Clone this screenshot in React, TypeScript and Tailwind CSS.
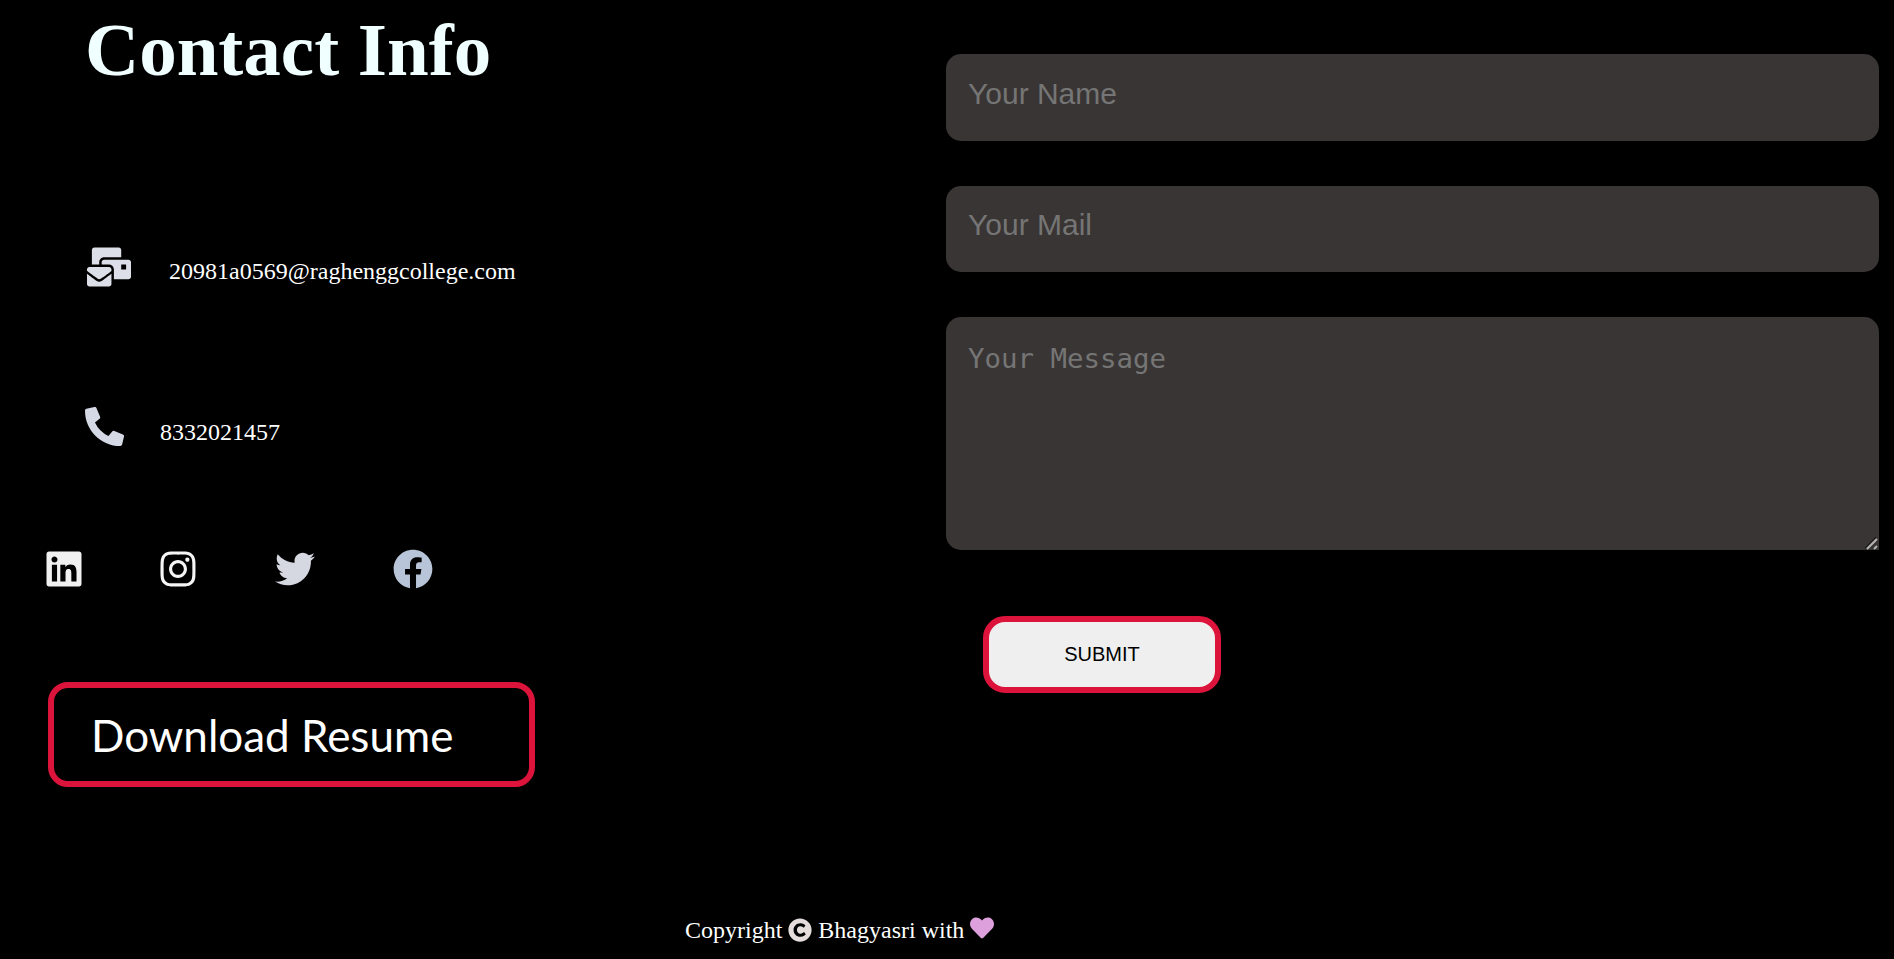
import { FaMailBulk, FaPhoneAlt, FaLinkedin, FaInstagram, FaTwitter, FaFacebook, FaCopyright, FaHeart } from "react-icons/fa";

export default function App() {
  return (
    <div className="h-[959px] overflow-hidden bg-black font-['Liberation_Serif',serif] text-white">
      <div className="flex h-[916px]">
        <div className="w-[946px] shrink-0">
          <h1 className="ml-[85px] text-[75px] leading-[100px] font-bold text-[#f0ffff]">Contact Info</h1>
          <div className="mt-[144px] ml-[87px] flex h-[45px] items-center">
            <FaMailBulk size={44} className="text-[#dcdfe8]" />
            <span className="mt-[9px] ml-[38px] text-[24px] leading-[28px]">20981a0569@raghenggcollege.com</span>
          </div>
          <div className="mt-[117px] ml-[85px] flex h-[40px] items-center">
            <FaPhoneAlt size={39} className="text-[#d5d9e5]" />
            <span className="mt-[12px] ml-[36px] text-[24px] leading-[28px]">8332021457</span>
          </div>
          <div className="mt-[103px] ml-[44px] flex">
            <FaLinkedin size={40} className="text-[#f0f0f0]" />
            <FaInstagram size={40} className="ml-[74px] text-[#f5f5f5]" />
            <FaTwitter size={40} className="ml-[77px] text-[#d5d8e0]" />
            <FaFacebook size={40} className="ml-[78px] text-[#b8c4d8]" />
          </div>
          <a className="mt-[93px] ml-[48px] flex h-[105px] w-[487px] items-center rounded-[20px] border-[6px] border-[#dc143c] pl-[37px] font-['Lato',sans-serif] text-[44px] text-white">
            Download Resume
          </a>
        </div>
        <form className="flex-1 pt-[54px] pr-[15px]">
          <input
            placeholder="Your Name"
            className="mb-[45px] block h-[87px] w-full rounded-[15px] bg-[#393534] px-[22px] pb-[8px] font-['Liberation_Sans',sans-serif] text-[30px] outline-none placeholder:text-[#757575]"
          />
          <input
            placeholder="Your Mail"
            className="mb-[45px] block h-[86px] w-full rounded-[15px] bg-[#393534] px-[22px] pb-[8px] font-['Liberation_Sans',sans-serif] text-[30px] outline-none placeholder:text-[#757575]"
          />
          <div className="relative">
            <textarea
              placeholder="Your Message"
              className="block h-[233px] w-full rounded-[15px] bg-[#393534] px-[22px] pt-[26px] font-['DejaVu_Sans_Mono',monospace] text-[27.4px] leading-[32px] outline-none placeholder:text-[#757575]"
            />
            <svg viewBox="0 0 14 14" className="absolute right-0 bottom-0 h-[14px] w-[14px]">
              <rect width="14" height="14" fill="#393534" />
              <path d="M1 13 L12 2" stroke="#111" strokeWidth="1" transform="translate(-1 -1)" />
              <path d="M2 13 L12 3" stroke="#b5b5b5" strokeWidth="2" />
              <path d="M9 13 L12 10" stroke="#b5b5b5" strokeWidth="2" />
            </svg>
          </div>
          <button
            type="button"
            className="mt-[66px] ml-[37px] block h-[77px] w-[238px] rounded-[22px] border-[6px] border-[#dc143c] bg-[#efefef] pb-[2px] font-['Liberation_Sans',sans-serif] text-[20px] text-black"
          >
            SUBMIT
          </button>
        </form>
      </div>
      <footer className="flex items-center pl-[685px] text-[24px] leading-[28px]">
        <span>Copyright</span>
        <FaCopyright size={24} className="mx-[6px] text-[#e5dcdc]" />
        <span>Bhagyasri with</span>
        <FaHeart size={24} className="ml-[6px] -mt-[4px] text-[#dda0dd]" />
      </footer>
    </div>
  );
}
